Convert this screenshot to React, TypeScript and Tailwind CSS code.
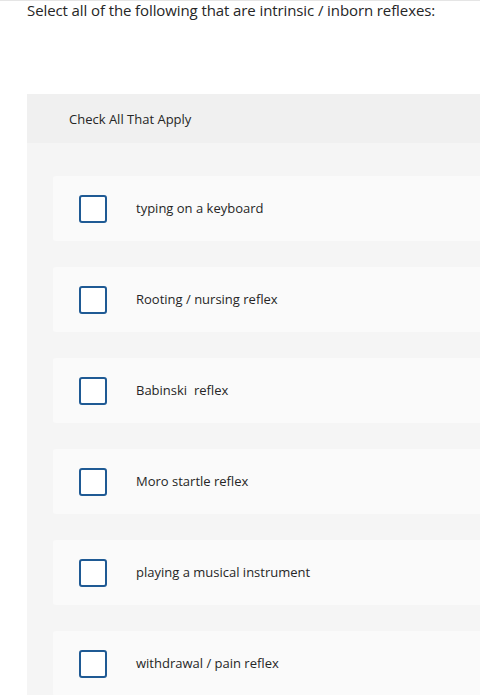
const options = [
  "typing on a keyboard",
  "Rooting / nursing reflex",
  "Babinski  reflex",
  "Moro startle reflex",
  "playing a musical instrument",
  "withdrawal / pain reflex",
]

export default function App() {
  return (
    <div className="h-[695px] w-[480px] overflow-hidden bg-white border-t border-[#e5e5e5] text-[#262626] font-['Open_Sans',sans-serif]">
      {/* Prompt */}
      <p className="pl-[27px] text-[15px] leading-[18px] tracking-[-0.1px] whitespace-pre">
        Select all of the following that are intrinsic / inborn reflexes:
      </p>

      {/* Answer panel */}
      <div className="ml-[27px] mt-[75px] w-[500px] bg-[#f5f5f5]">
        <div className="h-[49px] bg-[#f0f0f0] pl-[42px] flex items-center text-[13px] pt-[2px]">
          Check All That Apply
        </div>
        <div className="pl-[26px] pt-[33px] flex flex-col gap-[26px]">
          {options.map((label, i) => (
            <label key={i} className="h-[65px] bg-[#fafafa] flex items-center pl-[26px] rounded-l-[3px]">
              <span className="w-[28px] h-[28px] border-2 border-[#1f5a94] rounded-[3px] bg-white shrink-0" />
              <span className="ml-[29px] text-[13px] whitespace-pre pt-[1px]">{label}</span>
            </label>
          ))}
        </div>
      </div>
    </div>
  )
}
